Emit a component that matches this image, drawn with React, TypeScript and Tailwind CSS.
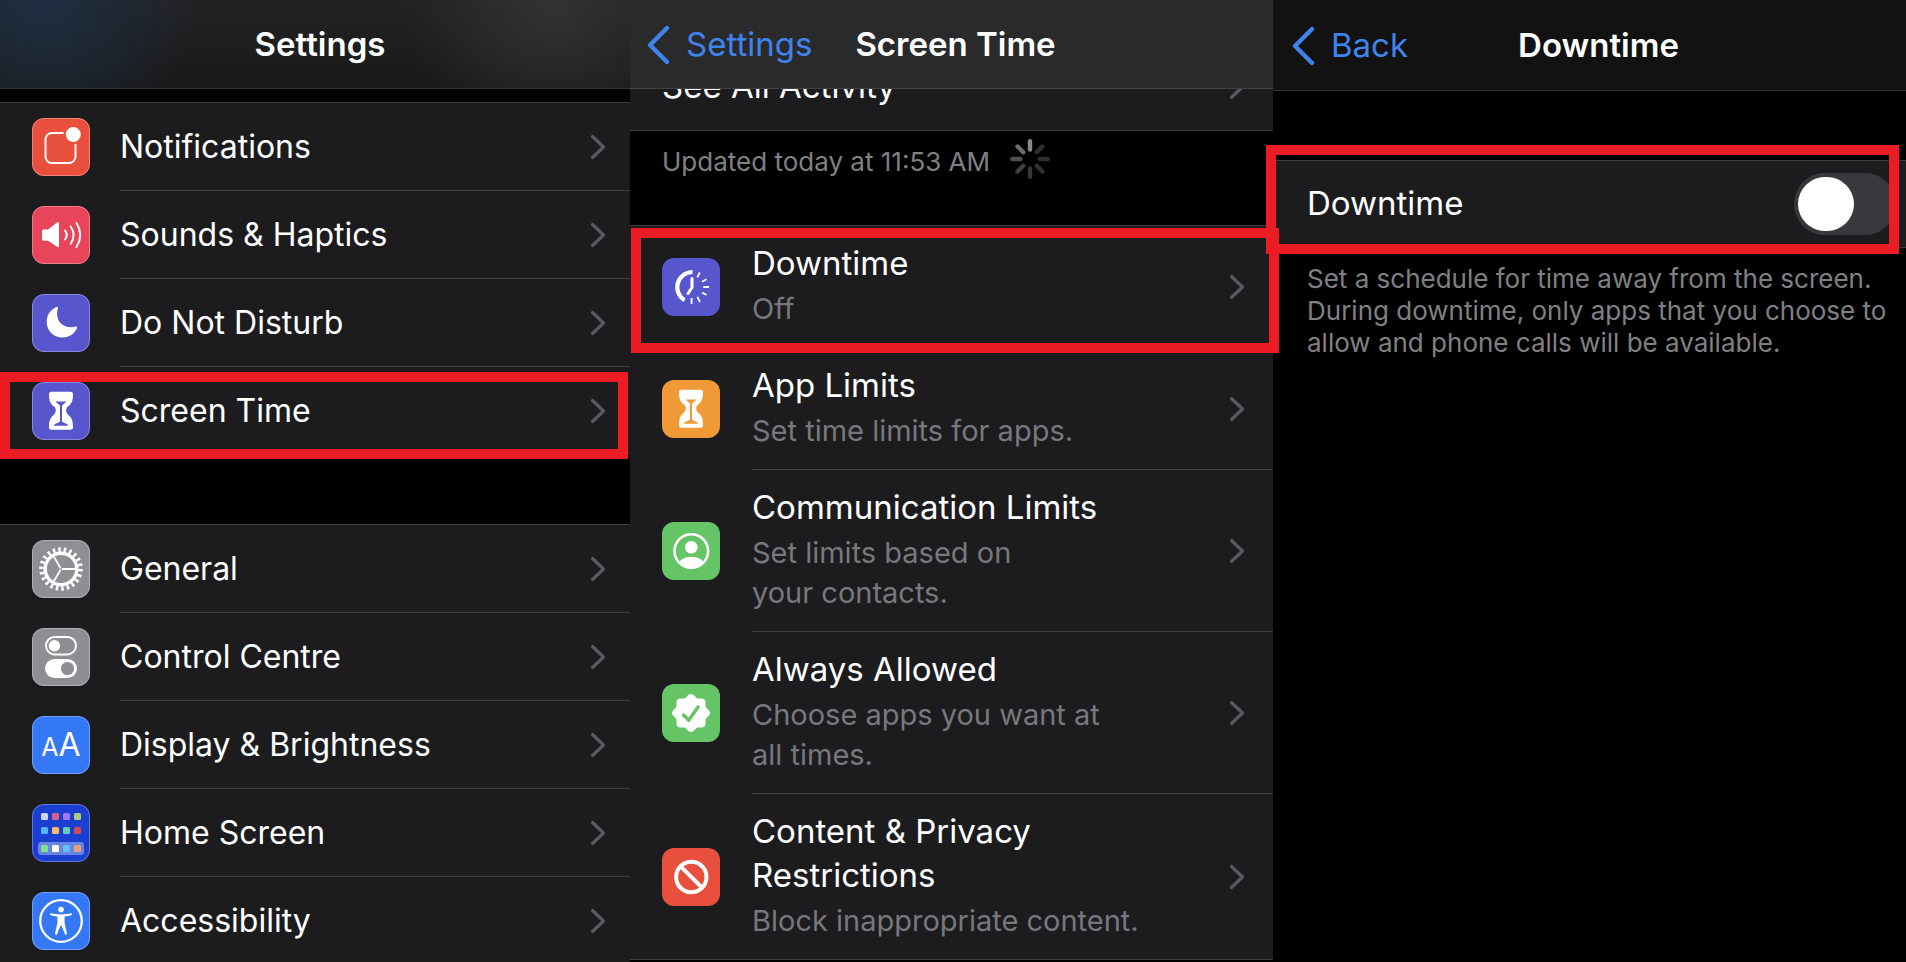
import React, { useState } from "react";

const tiles = {
  red: "bg-[#e94f3d]",
  pink: "bg-[#e8445a]",
  indigo: "bg-[#5856cc]",
  gray: "bg-[#8e8e93]",
  blue: "bg-[#3478f6]",
  navy: "bg-[#1b3fd0]",
  orange: "bg-[#f09a37]",
  green: "bg-[#65c466]",
};

type TileColor = keyof typeof tiles;

function Glyph({ children }: { children: React.ReactNode }) {
  return (
    <svg viewBox="0 0 58 58" className="w-full h-full" fill="none" aria-hidden="true">
      {children}
    </svg>
  );
}

function NotificationsGlyph() {
  return (
    <Glyph>
      <rect x="13.5" y="15" width="30" height="30" rx="6.5" stroke="#fff" strokeWidth="2" />
      <circle cx="41.3" cy="16.5" r="8.7" fill="#fff" stroke="#e94f3d" strokeWidth="2.4" />
    </Glyph>
  );
}

function SoundsGlyph() {
  return (
    <Glyph>
      <path
        d="M11.5 23.5H16L25 16.4Q27 15.2 27 17.5V40Q27 42 25 40.8L16 34.8H11.5Q10 34.8 10 33V25Q10 23.5 11.5 23.5Z"
        fill="#fff"
      />
      <path
        d="M33 24.5Q36.5 29 33 33.5M38.7 20.5Q44.5 29 38.7 37.8M44.5 17Q52 29 44.5 41"
        stroke="#fff"
        strokeWidth="2"
        strokeLinecap="round"
      />
    </Glyph>
  );
}

function MoonGlyph() {
  return (
    <Glyph>
      <path
        d="M24.6 12.9C18.5 15.3 14.7 21 14.7 27.8C14.7 36.8 21.5 43.6 30.5 43.6C37.2 43.6 43 39.8 45 33.6C45.3 32.6 44.6 32.2 43.6 32.5C42.3 33 40.6 33.2 39 33.2C30.8 33.2 25.1 27.7 25.1 19.4C25.1 17.6 25.4 15.8 25.9 14.3C26.3 13.1 25.7 12.5 24.6 12.9Z"
        fill="#fff"
      />
    </Glyph>
  );
}

function HourglassGlyph({ sand }: { sand: string }) {
  return (
    <Glyph>
      <path
        d="M19.5 9.7H38.5Q41 9.7 41 12.2C41 19.5 39.5 21.5 36 24.5C33.6 26.6 33.6 30.3 36 32.4C39.5 35.5 41 38 41 45.2Q41 47.7 38.5 47.7H19.5Q17 47.7 17 45.2C17 38 18.5 35.5 22 32.4C24.4 30.3 24.4 26.6 22 24.5C18.5 21.5 17 19.5 17 12.2Q17 9.7 19.5 9.7Z"
        fill="#fff"
      />
      <path
        d="M23.6 19.6H34.4C33.8 21.2 31 21.8 30 23.8V39.4C31.5 41 35.4 41.2 36.4 43.8H21.6C22.6 41.2 26.5 41 28 39.4V23.8C27 21.8 24.2 21.2 23.6 19.6Z"
        fill={sand}
      />
    </Glyph>
  );
}

function GearGlyph() {
  return (
    <Glyph>
      <g stroke="#fff">
        <circle cx="29" cy="29" r="15.8" strokeWidth="3.4" />
        <circle cx="29" cy="29" r="19.5" strokeWidth="4.6" pathLength="44" strokeDasharray="0.9 1.1" />
        <path d="M29 29H44M29 29L21.5 16M29 29L21.5 42" strokeWidth="1.8" />
      </g>
      <circle cx="29" cy="29" r="1" fill="#8e8e93" />
    </Glyph>
  );
}

function ControlCentreGlyph() {
  return (
    <Glyph>
      <rect x="14" y="9" width="30" height="17.4" rx="8.7" stroke="#fff" strokeWidth="2" />
      <circle cx="22.4" cy="17.7" r="5.7" fill="#fff" />
      <rect x="13" y="31" width="32" height="19" rx="9.5" fill="#fff" />
      <circle cx="35.5" cy="40.5" r="6.6" fill="#8e8e93" />
    </Glyph>
  );
}

function TextSizeGlyph() {
  return (
    <span className="flex h-full items-baseline justify-center text-white leading-[58px]" aria-hidden="true">
      <span className="text-[25px]">A</span>
      <span className="text-[32px]">A</span>
    </span>
  );
}

const homeApps = [
  { y: 9, colors: ["#cdd6f5", "#dd5f86", "#a077ff", "#a9cf7c"] },
  { y: 23, colors: ["#55b4fb", "#f0bd6c", "#68cdb4", "#d04c5c"] },
  { y: 41, colors: ["#82e394", "#ffffff", "#62c0fc", "#e8a176"] },
];

function HomeScreenGlyph() {
  return (
    <Glyph>
      <rect x="6" y="38" width="46" height="13" rx="3.5" fill="#6b86e0" />
      {homeApps.map((row) =>
        row.colors.map((color, i) => (
          <rect key={color} x={9 + i * 11} y={row.y} width="7" height="7" rx="1.5" fill={color} />
        ))
      )}
    </Glyph>
  );
}

function AccessibilityGlyph() {
  return (
    <Glyph>
      <circle cx="29" cy="29" r="20.8" stroke="#fff" strokeWidth="2.3" />
      <circle cx="29" cy="17.6" r="2.8" fill="#fff" />
      <path
        d="M19 21.3C25 22.8 33 22.8 39 21.3Q40.4 21.4 40 22.8C38 23.8 35 24.3 32.6 24.6V31L35 41.6Q34.8 43.4 33.2 42.8L29.6 34H28.4L24.8 42.8Q23.2 43.4 23 41.6L25.4 31V24.6C23 24.3 20 23.8 18 22.8Q17.6 21.4 19 21.3Z"
        fill="#fff"
      />
    </Glyph>
  );
}

function DowntimeGlyph() {
  return (
    <Glyph>
      <path d="M30.5 14A15.2 15.2 0 0 0 22.6 42.2" stroke="#fff" strokeWidth="4.2" />
      <path d="M30 20.5V29.5L26 35.5" stroke="#fff" strokeWidth="3" strokeLinecap="round" strokeLinejoin="round" />
      <path
        d="M35.3 19.3L37.8 14.5M40 23.8L44.5 21.2M41.3 29H47M40 34.5L44.5 37M35.3 38.8L38 44M29.6 40V46"
        stroke="#fff"
        strokeWidth="1.8"
      />
    </Glyph>
  );
}

function ContactGlyph() {
  return (
    <Glyph>
      <circle cx="29.3" cy="29" r="16.8" stroke="#fff" strokeWidth="2.6" />
      <circle cx="29.3" cy="25.2" r="6.3" fill="#fff" />
      <path d="M17 40.2C19.5 36.6 24 34.8 29.3 34.8C34.6 34.8 39.1 36.6 41.6 40.2C38.6 43.9 34.3 46 29.3 46C24.3 46 20 43.9 17 40.2Z" fill="#fff" />
    </Glyph>
  );
}

function CheckBadgeGlyph() {
  return (
    <Glyph>
      <rect x="14.5" y="14.5" width="29" height="29" rx="4" fill="#fff" />
      <rect x="14.5" y="14.5" width="29" height="29" rx="4" fill="#fff" transform="rotate(45 29 29)" />
      <path d="M21.5 31L26.8 36.2L36 23" stroke="#65c466" strokeWidth="3.4" strokeLinecap="round" strokeLinejoin="round" />
    </Glyph>
  );
}

function ProhibitGlyph() {
  return (
    <Glyph>
      <circle cx="29.3" cy="29" r="15.2" stroke="#fff" strokeWidth="4" />
      <path d="M18.6 18.3L40 39.7" stroke="#fff" strokeWidth="4" />
    </Glyph>
  );
}

const spokes = [0.6, 0.2, 0.2, 0.22, 0.24, 0.28, 0.34, 0.48];

function Spinner() {
  return (
    <svg viewBox="0 0 40 40" className="w-10 h-10" role="img" aria-label="Updating">
      {spokes.map((opacity, i) => (
        <path
          key={i}
          d="M20 2.3V10.5"
          stroke="#e5e5ea"
          strokeOpacity={opacity}
          strokeWidth="4.4"
          strokeLinecap="round"
          transform={`rotate(${i * 45} 20 20)`}
        />
      ))}
    </svg>
  );
}

function Chevron() {
  return (
    <svg viewBox="0 0 16 26" className="w-4 h-[26px] shrink-0" fill="none" aria-hidden="true">
      <path d="M2.5 2.5L13.5 13L2.5 23.5" stroke="#5a5a5e" strokeWidth="3.2" strokeLinecap="round" strokeLinejoin="round" />
    </svg>
  );
}

function BackLink({ label }: { label: string }) {
  return (
    <a href="#back" className="flex items-center gap-4 text-[33px] text-[#3f84ec]">
      <svg viewBox="0 0 24 40" className="w-6 h-10" fill="none" aria-hidden="true">
        <path d="M21 3L4 20L21 37" stroke="currentColor" strokeWidth="4.4" strokeLinecap="round" strokeLinejoin="round" />
      </svg>
      {label}
    </a>
  );
}

function Tile({ color, outlined, children }: { color: TileColor; outlined?: boolean; children: React.ReactNode }) {
  return (
    <span
      className={`w-[58px] h-[58px] shrink-0 rounded-xl overflow-hidden ${tiles[color]} ${
        outlined ? "outline -outline-offset-1 outline-white/30" : ""
      }`}
    >
      {children}
    </span>
  );
}

// Red marker drawn round the row that should be tapped
function Highlight({ className }: { className: string }) {
  return <span className={`absolute z-20 border-[10px] border-[#ec1c24] pointer-events-none ${className}`} />;
}

interface SettingItem {
  label: string;
  color: TileColor;
  icon: React.ReactNode;
  highlighted?: boolean;
}

const alertSettings: SettingItem[] = [
  { label: "Notifications", color: "red", icon: <NotificationsGlyph /> },
  { label: "Sounds & Haptics", color: "pink", icon: <SoundsGlyph /> },
  { label: "Do Not Disturb", color: "indigo", icon: <MoonGlyph /> },
  { label: "Screen Time", color: "indigo", icon: <HourglassGlyph sand="#5856cc" />, highlighted: true },
];

const deviceSettings: SettingItem[] = [
  { label: "General", color: "gray", icon: <GearGlyph /> },
  { label: "Control Centre", color: "gray", icon: <ControlCentreGlyph /> },
  { label: "Display & Brightness", color: "blue", icon: <TextSizeGlyph /> },
  { label: "Home Screen", color: "navy", icon: <HomeScreenGlyph /> },
  { label: "Accessibility", color: "blue", icon: <AccessibilityGlyph /> },
];

const screenTimeOptions = [
  { title: "Downtime", detail: "Off", color: "indigo", icon: <DowntimeGlyph />, highlighted: true },
  { title: "App Limits", detail: "Set time limits for apps.", color: "orange", icon: <HourglassGlyph sand="#f09a37" /> },
  { title: "Communication Limits", detail: "Set limits based on\nyour contacts.", color: "green", icon: <ContactGlyph /> },
  { title: "Always Allowed", detail: "Choose apps you want at\nall times.", color: "green", icon: <CheckBadgeGlyph /> },
  { title: "Content & Privacy\nRestrictions", detail: "Block inappropriate content.", color: "red", icon: <ProhibitGlyph /> },
] as { title: string; detail: string; color: TileColor; icon: React.ReactNode; highlighted?: boolean }[];

function SettingsGroup({ items }: { items: SettingItem[] }) {
  return (
    <ul className="bg-[#1c1c1e] border-t border-[#3d3d40]">
      {items.map((item, index) => (
        <li key={item.label} className="relative">
          <a href="#setting" className="flex items-center gap-[30px] pl-8 h-[88px]">
            <Tile color={item.color} outlined>
              {item.icon}
            </Tile>
            <span
              className={`flex flex-1 h-full items-center justify-between pr-6 text-[32px] ${
                index < items.length - 1 ? "border-b border-[#3d3d40]" : ""
              }`}
            >
              {item.label}
              <Chevron />
            </span>
          </a>
          {item.highlighted && <Highlight className="top-[5px] -bottom-1 left-0 right-0.5" />}
        </li>
      ))}
    </ul>
  );
}

function SettingsPanel() {
  return (
    <section className="min-w-0 bg-black">
      <header className="flex h-[89px] items-center justify-center border-b border-[#343436] bg-[#1b1b1b] bg-[radial-gradient(circle_at_7%_0%,#1e2e42_0,transparent_150px),radial-gradient(circle_at_88%_0%,#323232_0,transparent_150px),linear-gradient(#232325,#191919)] pt-0.5 pl-2.5">
        <h1 className="text-[33px] font-semibold">Settings</h1>
      </header>
      <div className="flex flex-col gap-[69px] pt-[13px]">
        <SettingsGroup items={alertSettings} />
        <SettingsGroup items={deviceSettings} />
      </div>
    </section>
  );
}

function ScreenTimePanel() {
  return (
    <section className="min-w-0 bg-black">
      <header className="relative z-10 grid h-[89px] grid-cols-[1fr_auto_1fr] items-center border-b border-[#414143] bg-[#2a2a2c] pt-0.5 pl-4 pr-2">
        <BackLink label="Settings" />
        <h2 className="text-[33px] font-semibold">Screen Time</h2>
      </header>
      <a
        href="#activity"
        className="-mt-[46px] flex h-[88px] items-center justify-between border-b border-[#3d3d40] bg-[#1c1c1e] pl-8 pr-7 text-[33px]"
      >
        See All Activity
        <Chevron />
      </a>
      <div className="flex h-[94px] items-start gap-5 pt-2 pl-8 text-[#808084]">
        <p className="text-[26px] leading-[46px]">Updated today at 11:53 AM</p>
        <Spinner />
      </div>
      <ul className="border-y border-[#3d3d40] bg-[#1c1c1e]">
        {screenTimeOptions.map((option, index) => (
          <li key={option.title} className="relative">
            <a href="#option" className="flex items-center gap-8 pl-8">
              <Tile color={option.color}>{option.icon}</Tile>
              <span
                className={`flex flex-1 items-center justify-between pr-7 ${
                  index < screenTimeOptions.length - 1 ? "border-b border-[#3d3d40]" : ""
                }`}
              >
                <span className="whitespace-pre-line pt-[15px] pb-[18px]">
                  <span className="block text-[33px] leading-[44px]">{option.title}</span>
                  <span className="block pt-1 text-[29px] leading-10 text-[#78787c]">{option.detail}</span>
                </span>
                <Chevron />
              </span>
            </a>
            {option.highlighted && <Highlight className="top-0.5 -bottom-[5px] left-px -right-1.5" />}
          </li>
        ))}
      </ul>
    </section>
  );
}

function DowntimePanel() {
  const [enabled, setEnabled] = useState(false);

  return (
    <section className="min-w-0 bg-black">
      <header className="grid h-[91px] grid-cols-[1fr_auto_1fr] items-center border-b border-[#2c2c2e] bg-[#121212] pt-0.5 pl-[18px]">
        <BackLink label="Back" />
        <h2 className="text-[33px] font-semibold">Downtime</h2>
      </header>
      <div className="relative mt-[69px] flex h-[88px] items-center justify-between border-y border-[#3d3d40] bg-[#1c1c1e] pl-[34px] pr-2.5">
        <label htmlFor="downtime" className="text-[33px]">
          Downtime
        </label>
        <span className="relative flex h-[62px] w-[102px]">
          <input
            id="downtime"
            type="checkbox"
            role="switch"
            checked={enabled}
            onChange={(e) => setEnabled(e.target.checked)}
            className="peer h-full w-full appearance-none rounded-full bg-[#39393d] checked:bg-[#30d158]"
          />
          <span className="pointer-events-none absolute top-1 left-1 h-[54px] w-14 rounded-full bg-white peer-checked:left-[42px]" />
        </span>
        <Highlight className="-top-4 -bottom-[7px] -left-[7px] right-[7px]" />
      </div>
      <p className="whitespace-pre-line pt-[15px] pl-[34px] text-[26px] leading-8 text-[#808084]">
        {"Set a schedule for time away from the screen.\nDuring downtime, only apps that you choose to\nallow and phone calls will be available."}
      </p>
    </section>
  );
}

function App() {
  return (
    <main className="grid h-screen grid-cols-[630fr_643fr_633fr] overflow-hidden bg-black font-[Inter,'Liberation_Sans',sans-serif] text-white">
      <SettingsPanel />
      <ScreenTimePanel />
      <DowntimePanel />
    </main>
  );
}

export default App;
